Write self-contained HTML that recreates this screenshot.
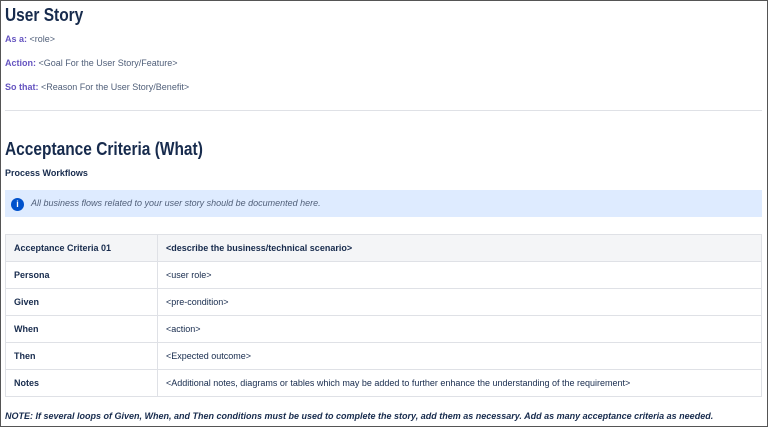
<!DOCTYPE html><html><head><style>
body{margin:0;width:768px;height:427px;overflow:hidden;background:#fff;font-family:"Liberation Sans",sans-serif;}
.f{position:absolute;left:0;top:0;width:766px;height:425px;border:1px solid #555;}
.a{position:absolute;white-space:nowrap;}
h1{position:absolute;margin:0;font-size:18px;color:#172b4d;font-weight:bold;left:5px;transform:scaleX(0.86);transform-origin:left top;}
.l{font-size:9px;color:#505f79;}
.l b{color:#6554c0;}
table{position:absolute;left:5px;top:234px;width:757px;border-collapse:collapse;font-size:9px;color:#172b4d;}
td{border:1px solid #dfe1e6;height:26px;padding:0 0 0 8px;}
td:first-child{width:143px;font-weight:bold;}
tr:first-child td{background:#f4f5f7;font-weight:bold;}
</style></head><body><div class="f"></div>
<h1 style="top:5px">User Story</h1>
<div class="a l" style="left:5px;top:34px"><b>As a:</b> &lt;role&gt;</div>
<div class="a l" style="left:5px;top:58px"><b>Action:</b> &lt;Goal For the User Story/Feature&gt;</div>
<div class="a l" style="left:5px;top:82px"><b>So that:</b> &lt;Reason For the User Story/Benefit&gt;</div>
<div class="a" style="left:5px;top:110px;width:757px;height:1px;background:#dfe1e6"></div>
<h1 style="top:139px">Acceptance Criteria (What)</h1>
<div class="a" style="left:5px;top:168px;font-size:9px;font-weight:bold;color:#172b4d">Process Workflows</div>
<div class="a" style="left:5px;top:190px;width:757px;height:27px;background:#deebff"></div>
<div class="a" style="left:11px;top:198px;width:13px;height:13px;border-radius:50%;background:#0052cc;color:#fff;font-size:9px;font-weight:bold;text-align:center;line-height:13px">i</div>
<div class="a" style="left:31px;top:198px;font-size:9px;font-style:italic;color:#505f79">All business flows related to your user story should be documented here.</div>
<table>
<tr><td>Acceptance Criteria 01</td><td>&lt;describe the business/technical scenario&gt;</td></tr>
<tr><td>Persona</td><td>&lt;user role&gt;</td></tr>
<tr><td>Given</td><td>&lt;pre-condition&gt;</td></tr>
<tr><td>When</td><td>&lt;action&gt;</td></tr>
<tr><td>Then</td><td>&lt;Expected outcome&gt;</td></tr>
<tr><td>Notes</td><td>&lt;Additional notes, diagrams or tables which may be added to further enhance the understanding of the requirement&gt;</td></tr>
</table>
<div class="a" style="left:5px;top:411px;font-size:9px;font-weight:bold;font-style:italic;color:#172b4d">NOTE: If several loops of Given, When, and Then conditions must be used to complete the story, add them as necessary. Add as many acceptance criteria as needed.</div>
</body></html>
